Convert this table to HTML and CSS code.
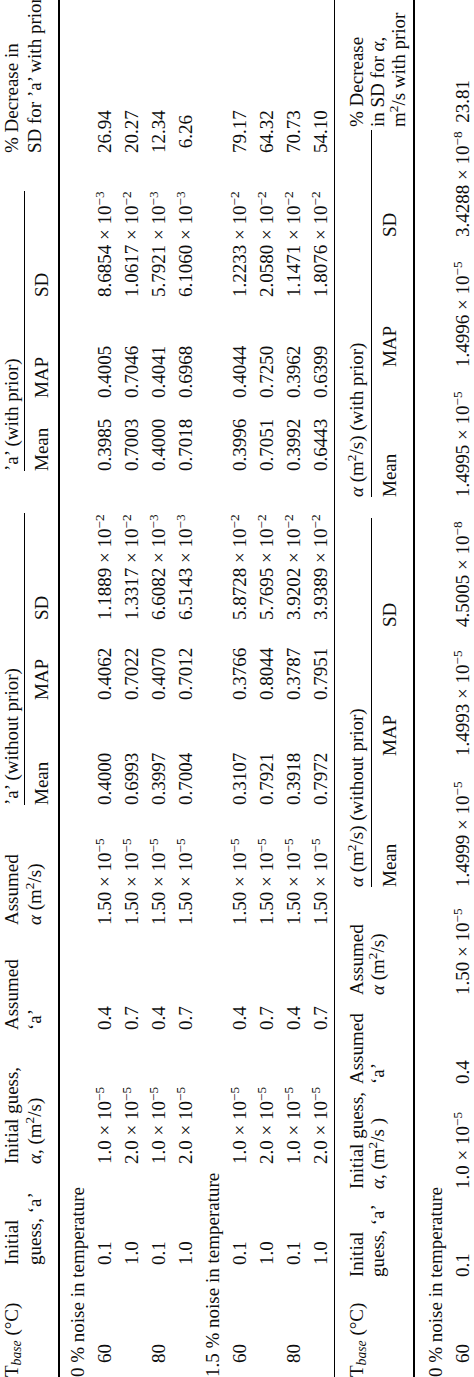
FILE: index.html
```html
<!DOCTYPE html>
<html lang="en">
<head>
<meta charset="utf-8">
<title>Table</title>
<link rel="stylesheet" href="styles.css">
</head>
<body>
<div class="page">
  <div class="sheet">
    <section class="tbl t1">
      <div class="thead cols">
        <div class="hc r2">T<span class="sb">base</span> (°C)</div>
        <div class="hc r2">Initial<br>guess, ‘a’</div>
        <div class="hc r2">Initial guess,<br><i>α</i>, (m<span class="sq">2</span>/s)</div>
        <div class="hc r2">Assumed<br>‘a’</div>
        <div class="hc r2">Assumed<br><i>α</i> (m<span class="sq">2</span>/s)</div>
        <div class="grp g1">’a’ (without prior)</div>
        <div class="grp g2">’a’ (with prior)</div>
        <div class="hc r2">% Decrease in<br>SD for ’a’ with prior</div>
        <div class="sub">Mean</div>
        <div class="sub">MAP</div>
        <div class="sub">SD</div>
        <div class="sub">Mean</div>
        <div class="sub">MAP</div>
        <div class="sub">SD</div>
      </div>
      <div class="tbody">
        <div class="sec">0 % noise in temperature</div>
        <div class="row cols"><div class="tb">60</div><div>0.1</div><div>1.0 × 10<span class="sp">−5</span></div><div>0.4</div><div>1.50 × 10<span class="sp">−5</span></div><div>0.4000</div><div>0.4062</div><div>1.1889 × 10<span class="sp">−2</span></div><div>0.3985</div><div>0.4005</div><div>8.6854 × 10<span class="sp">−3</span></div><div class="pct">26.94</div></div>
        <div class="row cols"><div class="tb"></div><div>1.0</div><div>2.0 × 10<span class="sp">−5</span></div><div>0.7</div><div>1.50 × 10<span class="sp">−5</span></div><div>0.6993</div><div>0.7022</div><div>1.3317 × 10<span class="sp">−2</span></div><div>0.7003</div><div>0.7046</div><div>1.0617 × 10<span class="sp">−2</span></div><div class="pct">20.27</div></div>
        <div class="row cols"><div class="tb">80</div><div>0.1</div><div>1.0 × 10<span class="sp">−5</span></div><div>0.4</div><div>1.50 × 10<span class="sp">−5</span></div><div>0.3997</div><div>0.4070</div><div>6.6082 × 10<span class="sp">−3</span></div><div>0.4000</div><div>0.4041</div><div>5.7921 × 10<span class="sp">−3</span></div><div class="pct">12.34</div></div>
        <div class="row cols"><div class="tb"></div><div>1.0</div><div>2.0 × 10<span class="sp">−5</span></div><div>0.7</div><div>1.50 × 10<span class="sp">−5</span></div><div>0.7004</div><div>0.7012</div><div>6.5143 × 10<span class="sp">−3</span></div><div>0.7018</div><div>0.6968</div><div>6.1060 × 10<span class="sp">−3</span></div><div class="pct">6.26</div></div>
        <div class="sec">1.5 % noise in temperature</div>
        <div class="row cols"><div class="tb">60</div><div>0.1</div><div>1.0 × 10<span class="sp">−5</span></div><div>0.4</div><div>1.50 × 10<span class="sp">−5</span></div><div>0.3107</div><div>0.3766</div><div>5.8728 × 10<span class="sp">−2</span></div><div>0.3996</div><div>0.4044</div><div>1.2233 × 10<span class="sp">−2</span></div><div class="pct">79.17</div></div>
        <div class="row cols"><div class="tb"></div><div>1.0</div><div>2.0 × 10<span class="sp">−5</span></div><div>0.7</div><div>1.50 × 10<span class="sp">−5</span></div><div>0.7921</div><div>0.8044</div><div>5.7695 × 10<span class="sp">−2</span></div><div>0.7051</div><div>0.7250</div><div>2.0580 × 10<span class="sp">−2</span></div><div class="pct">64.32</div></div>
        <div class="row cols"><div class="tb">80</div><div>0.1</div><div>1.0 × 10<span class="sp">−5</span></div><div>0.4</div><div>1.50 × 10<span class="sp">−5</span></div><div>0.3918</div><div>0.3787</div><div>3.9202 × 10<span class="sp">−2</span></div><div>0.3992</div><div>0.3962</div><div>1.1471 × 10<span class="sp">−2</span></div><div class="pct">70.73</div></div>
        <div class="row cols"><div class="tb"></div><div>1.0</div><div>2.0 × 10<span class="sp">−5</span></div><div>0.7</div><div>1.50 × 10<span class="sp">−5</span></div><div>0.7972</div><div>0.7951</div><div>3.9389 × 10<span class="sp">−2</span></div><div>0.6443</div><div>0.6399</div><div>1.8076 × 10<span class="sp">−2</span></div><div class="pct">54.10</div></div>
      </div>
    </section>

    <section class="tbl t2">
      <div class="thead cols">
        <div class="hc r2">T<span class="sb">base</span> (°C)</div>
        <div class="hc r2">Initial<br>guess, ‘a’</div>
        <div class="hc r2">Initial guess,<br><i>α</i>, (m<span class="sq">2</span>/s )</div>
        <div class="hc r2">Assumed<br>‘a’</div>
        <div class="hc r2">Assumed<br><i>α</i> (m<span class="sq">2</span>/s)</div>
        <div class="grp g1"><i>α</i> (m<span class="sq">2</span>/s) (without prior)</div>
        <div class="grp g2"><i>α</i> (m<span class="sq">2</span>/s) (with prior)</div>
        <div class="hc r2">% Decrease<br>in SD for <i>α</i>,<br>m<span class="sq">2</span>/s with prior</div>
        <div class="sub">Mean</div>
        <div class="sub">MAP</div>
        <div class="sub">SD</div>
        <div class="sub">Mean</div>
        <div class="sub">MAP</div>
        <div class="sub">SD</div>
      </div>
      <div class="tbody">
        <div class="sec">0 % noise in temperature</div>
        <div class="row cols"><div class="tb">60</div><div>0.1</div><div>1.0 × 10<span class="sp">−5</span></div><div>0.4</div><div>1.50 × 10<span class="sp">−5</span></div><div>1.4999 × 10<span class="sp">−5</span></div><div>1.4993 × 10<span class="sp">−5</span></div><div>4.5005 × 10<span class="sp">−8</span></div><div>1.4995 × 10<span class="sp">−5</span></div><div>1.4996 × 10<span class="sp">−5</span></div><div>3.4288 × 10<span class="sp">−8</span></div><div class="pct">23.81</div></div>
      </div>
    </section>
  </div>
</div>
</body>
</html>
```

FILE: styles.css
```css
html, body {
  margin: 0;
  padding: 0;
  background: #fff;
}

.page {
  width: 474px;
  height: 1377px;
  overflow: hidden;
}

.sheet {
  width: 1385px;
  height: 474px;
  transform-origin: 0 0;
  transform: translateY(1377px) rotate(-90deg);
  font-family: "Liberation Serif", "Times New Roman", serif;
  font-size: 19px;
  color: #0d0d0d;
}

.cols {
  display: grid;
  white-space: nowrap;
}

.t1 .cols {
  grid-template-columns: 112px 101px 134px 105px 120px 105px 80px 149px 73px 101px 144px 161px;
}

.t2 .cols {
  grid-template-columns: 100px 88px 105px 89px 108px 131px 129px 130px 130px 130px 110px 135px;
}

/* header */
.thead {
  border-bottom: 2px solid #000;
}

.t1 .thead {
  line-height: 23px;
  grid-template-rows: 25px 28px;
  padding-bottom: 5px;
}

.t2 .thead {
  line-height: 21px;
  grid-template-rows: 26px 28px;
  padding-top: 11px;
  padding-bottom: 13px;
}

.hc.r2 {
  grid-row: span 2;
}

.grp {
  grid-column: span 3;
  border-bottom: 1px solid #000;
}

.t1 .grp { padding-bottom: 1px; }
.t2 .grp { padding-bottom: 4px; }

.t1 .g1 { margin-right: 42px; }
.t1 .g2 { margin-right: 38px; }
.t2 .g1 { margin-right: 21px; }
.t2 .g2 { margin-right: 3px; }

.t1 .sub { margin-top: 5px; }
.t2 .sub { margin-top: 7px; }

/* body */
.tbody {
  line-height: 27px;
}

.t1 .tbody {
  padding-top: 4px;
  border-bottom: 1px solid #000;
}

.t2 .tbody {
  padding-top: 7px;
}

.sec {
  white-space: nowrap;
}

.tb {
  padding-left: 14px;
}

.t1 .pct {
  text-align: right;
  padding-right: 123px;
}

.t2 .pct {
  text-align: right;
  padding-right: 88px;
}

/* typographic helpers */
.sp, .sq {
  font-size: 0.7em;
  vertical-align: 0.5em;
  line-height: 0;
}

.sb {
  font-style: italic;
  font-size: 0.72em;
  vertical-align: -0.25em;
  line-height: 0;
}

i {
  font-style: italic;
}
```
